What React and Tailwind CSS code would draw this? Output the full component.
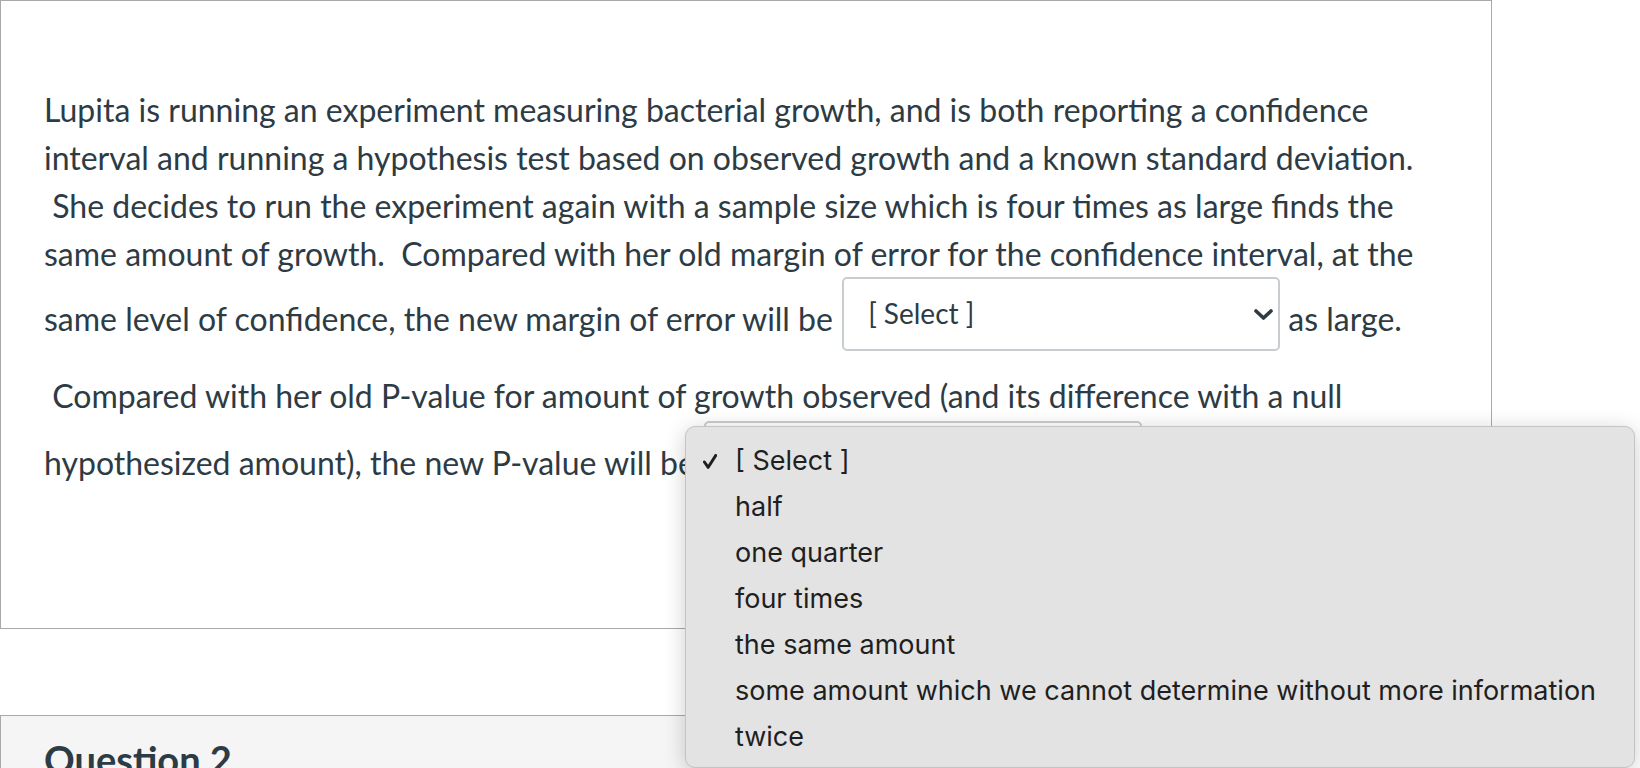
import { useState } from 'react';

const options = [
  '[ Select ]',
  'half',
  'one quarter',
  'four times',
  'the same amount',
  'some amount which we cannot determine without more information',
  'twice',
];

function Chevron() {
  return (
    <svg width="19" height="11" viewBox="0 0 19 11" fill="none">
      <path d="M2 2l7.5 7 7.5-7" stroke="#2d3b45" strokeWidth="3.6" strokeLinecap="round" strokeLinejoin="round" />
    </svg>
  );
}

function Check() {
  return (
    <svg width="14" height="15" viewBox="0 0 14 15" fill="none">
      <path d="M1.4 8l3.8 5.3 7.5-11.8" stroke="#1f1f1f" strokeWidth="3" strokeLinecap="round" strokeLinejoin="round" />
    </svg>
  );
}

function SelectBox({ value }) {
  return (
    <div className="w-[438px] h-[74px] shrink-0 border-2 border-[#c7cdd1] rounded-[5px] bg-white flex items-center justify-between pl-[24px] pr-[5px] text-[28px] leading-none">
      <span className="pb-[2px]">{value}</span>
      <Chevron />
    </div>
  );
}

export default function App() {
  const [selected] = useState(0);

  return (
    <div className="relative w-[1640px] h-[768px] overflow-hidden bg-white font-['Lato','Open_Sans',sans-serif] text-[#2d3b45]">
      {/* question 1 */}
      <div className="w-[1492px] h-[629px] border border-[#a9a9a9] pl-[43px] pt-[85px]">
        <div className="text-[32px] leading-[48px] whitespace-pre">
          <div>Lupita is running an experiment measuring bacterial growth, and is both reporting a confidence</div>
          <div>interval and running a hypothesis test based on observed growth and a known standard deviation.</div>
          <div> She decides to run the experiment again with a sample size which is four times as large finds the</div>
          <div>same amount of growth.  Compared with her old margin of error for the confidence interval, at the</div>
          <div className="flex items-start h-[94px]">
            <span className="mt-[17px]">same level of confidence, the new margin of error will be </span>
            <div className="-mt-[1px] ml-[1px]">
              <SelectBox value="[ Select ]" />
            </div>
            <span className="mt-[17px]"> as large.</span>
          </div>
          <div> Compared with her old P-value for amount of growth observed (and its difference with a null</div>
          <div className="flex items-start">
            <span className="mt-[19px]">hypothesized amount), the new P-value will be </span>
            <div className="mt-[1px] ml-[1px]">
              <SelectBox value="[ Select ]" />
            </div>
          </div>
        </div>
      </div>

      {/* question 2 header */}
      <div className="mt-[86px] w-[1492px] h-[200px] border border-[#a9a9a9] bg-[#f5f5f5] pl-[43px] pt-[24px]">
        <h2 className="text-[38px] leading-none font-bold">Question 2</h2>
      </div>

      {/* open native select menu */}
      <div className="absolute left-[685px] top-[426px] w-[950px] h-[342px] rounded-[10px] border border-[#c4c4c4] bg-[#e3e3e3] shadow-[0_4px_22px_rgba(0,0,0,0.2)] pt-[11px] pl-[17px] font-['Inter','Roboto',sans-serif] text-[27px] leading-[46px] text-[#1f1f1f]">
        {options.map((o, i) => (
          <div key={o} className="flex items-center">
            <span className="w-[32px] flex items-center">{i === selected ? <Check /> : null}</span>
            <span>{o}</span>
          </div>
        ))}
      </div>
    </div>
  );
}
